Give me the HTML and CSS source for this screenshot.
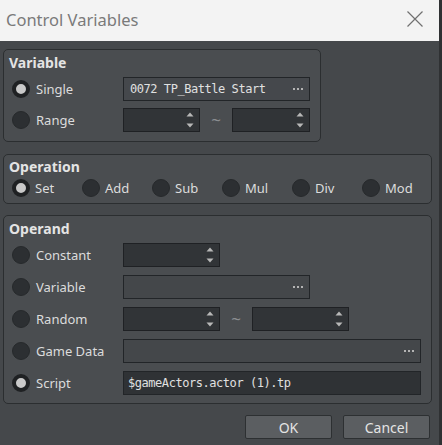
FILE: index.html
```html
<!DOCTYPE html>
<html>
<head>
<meta charset="utf-8">
<title>Control Variables</title>
<link rel="stylesheet" href="styles.css">
</head>
<body>
<div class="window">
  <div class="titlebar">
    <span class="title">Control Variables</span>
    <svg class="close" width="16" height="16" viewBox="0 0 16 16"><path d="M0.5 0.5 L15.5 15.5 M15.5 0.5 L0.5 15.5" stroke="#707070" stroke-width="1.2" fill="none"/></svg>
  </div>
  <div class="content">
    <div class="group group-var">
      <div class="legend">Variable</div>
      <div class="rows rows-var">
        <div class="row">
          <div class="opt"><span class="radio on"></span><span>Single</span></div>
          <div class="field w187"><span class="mono">0072 TP_Battle Start</span><svg class="dots" width="10" height="2" viewBox="0 0 10 2"><rect x="0" y="0" width="2" height="2"/><rect x="4" y="0" width="2" height="2"/><rect x="8" y="0" width="2" height="2"/></svg></div>
        </div>
        <div class="row">
          <div class="opt"><span class="radio"></span><span>Range</span></div>
          <div class="spin w77"><svg class="arrows" width="8" height="16" viewBox="0 0 8 16"><path d="M4 0.5 L7.5 4.5 L0.5 4.5Z M4 15.5 L7.5 11.5 L0.5 11.5Z"/></svg></div>
          <span class="tilde">~</span>
          <div class="spin w78"><svg class="arrows" width="8" height="16" viewBox="0 0 8 16"><path d="M4 0.5 L7.5 4.5 L0.5 4.5Z M4 15.5 L7.5 11.5 L0.5 11.5Z"/></svg></div>
        </div>
      </div>
    </div>

    <div class="group group-op">
      <div class="legend">Operation</div>
      <div class="oprow">
        <div class="opitem"><span class="radio on"></span><span>Set</span></div>
        <div class="opitem"><span class="radio"></span><span>Add</span></div>
        <div class="opitem"><span class="radio"></span><span>Sub</span></div>
        <div class="opitem"><span class="radio"></span><span>Mul</span></div>
        <div class="opitem"><span class="radio"></span><span>Div</span></div>
        <div class="opitem"><span class="radio"></span><span>Mod</span></div>
      </div>
    </div>

    <div class="group group-opnd">
      <div class="legend">Operand</div>
      <div class="rows rows-opnd">
        <div class="row">
          <div class="opt"><span class="radio"></span><span>Constant</span></div>
          <div class="spin w97"><svg class="arrows" width="8" height="16" viewBox="0 0 8 16"><path d="M4 0.5 L7.5 4.5 L0.5 4.5Z M4 15.5 L7.5 11.5 L0.5 11.5Z"/></svg></div>
        </div>
        <div class="row">
          <div class="opt"><span class="radio"></span><span>Variable</span></div>
          <div class="field w187 dim"><span></span><svg class="dots" width="10" height="2" viewBox="0 0 10 2"><rect x="0" y="0" width="2" height="2"/><rect x="4" y="0" width="2" height="2"/><rect x="8" y="0" width="2" height="2"/></svg></div>
        </div>
        <div class="row">
          <div class="opt"><span class="radio"></span><span>Random</span></div>
          <div class="spin w97"><svg class="arrows" width="8" height="16" viewBox="0 0 8 16"><path d="M4 0.5 L7.5 4.5 L0.5 4.5Z M4 15.5 L7.5 11.5 L0.5 11.5Z"/></svg></div>
          <span class="tilde">~</span>
          <div class="spin w97"><svg class="arrows" width="8" height="16" viewBox="0 0 8 16"><path d="M4 0.5 L7.5 4.5 L0.5 4.5Z M4 15.5 L7.5 11.5 L0.5 11.5Z"/></svg></div>
        </div>
        <div class="row">
          <div class="opt"><span class="radio"></span><span>Game Data</span></div>
          <div class="field w298 dim"><span></span><svg class="dots" width="10" height="2" viewBox="0 0 10 2"><rect x="0" y="0" width="2" height="2"/><rect x="4" y="0" width="2" height="2"/><rect x="8" y="0" width="2" height="2"/></svg></div>
        </div>
        <div class="row">
          <div class="opt"><span class="radio on"></span><span>Script</span></div>
          <div class="field w298 script"><span class="mono">$gameActors.actor (1).tp</span></div>
        </div>
      </div>
    </div>

    <div class="buttons">
      <div class="btn">OK</div>
      <div class="btn">Cancel</div>
    </div>
  </div>
</div>
</body>
</html>
```

FILE: styles.css
```css
* { box-sizing: border-box; margin: 0; padding: 0; }
html, body { width: 442px; height: 445px; overflow: hidden; }
body {
  background: #45484b;
  font-family: "Noto Sans", "Open Sans", sans-serif;
  font-size: 13px;
  color: #dcdcdc;
}
.window {
  height: 445px;
  display: flex;
  flex-direction: column;
  border-right: 3px solid #2f3133;
}
.titlebar {
  height: 41px;
  flex: none;
  background: #f3f3f3;
  display: flex;
  align-items: center;
  justify-content: space-between;
  padding: 0 16px 3px 6px;
}
.title {
  font-size: 16.5px;
  color: #7a7a7a;
}
.content {
  display: flex;
  flex-direction: column;
  padding: 8px 0 0 3px;
}
.group {
  background: #4a4d50;
  border: 1px solid #2b2e30;
  border-radius: 5px;
  padding: 4px 0 0 8px;
  display: flex;
  flex-direction: column;
}
.group-var { width: 318px; height: 93px; }
.group-op { width: 429px; height: 50px; margin-top: 12px; padding-top: 3px; }
.group-opnd { width: 429px; height: 189px; margin-top: 11px; }
.legend {
  font-weight: 700;
  font-size: 14px;
  height: 18px;
  line-height: 18px;
  color: #e4e4e4;
  margin-left: -3px;
}
.rows { display: flex; flex-direction: column; margin-top: 5px; }
.rows-var { gap: 7px; }
.rows-opnd { gap: 8px; }
.row { display: flex; align-items: center; height: 24px; }
.opt {
  width: 111px;
  flex: none;
  display: flex;
  align-items: center;
  gap: 6px;
}
.oprow { display: flex; align-items: center; height: 22px; margin-top: 1px; }
.opitem {
  width: 70px;
  flex: none;
  display: flex;
  align-items: center;
  gap: 5px;
}
.radio {
  width: 18px;
  height: 18px;
  flex: none;
  border-radius: 50%;
  background: #2c2f32;
  border: 1px solid #26292b;
}
.radio.on {
  background: #c9c9c9;
  border: 4px solid #1f2123;
}
.field {
  height: 24px;
  border: 1px solid #222528;
  background: #45484c;
  display: flex;
  align-items: center;
  justify-content: space-between;
  padding: 0 6px 0 6px;
}
.field.dim { background: #44474a; }
.field.script { background: #2f3235; padding-left: 4px; }
.w187 { width: 187px; }
.w298 { width: 298px; }
.w77 { width: 77px; }
.w78 { width: 78px; }
.w97 { width: 97px; }
.mono {
  font-family: "DejaVu Sans Mono", "Liberation Mono", monospace;
  font-size: 12px;
  letter-spacing: -0.45px;
  color: #e0e0e0;
}
.dots { fill: #b4b4b4; }
.spin {
  height: 24px;
  border: 1px solid #1f2124;
  background: #313437;
  display: flex;
  align-items: center;
  justify-content: flex-end;
  padding-right: 5px;
}
.arrows { fill: #b8b8b8; }
.tilde {
  width: 32px;
  flex: none;
  text-align: center;
  color: #8a8d90;
  font-size: 17px;
  line-height: 24px;
}
.buttons {
  display: flex;
  justify-content: flex-end;
  gap: 11px;
  margin-top: 11px;
  padding-right: 9px;
}
.btn {
  width: 87px;
  height: 24px;
  background: #5b5e61;
  border: 1px solid #2d3032;
  border-radius: 2px;
  color: #e4e4e4;
  font-size: 14px;
  display: flex;
  align-items: center;
  justify-content: center;
}
```
